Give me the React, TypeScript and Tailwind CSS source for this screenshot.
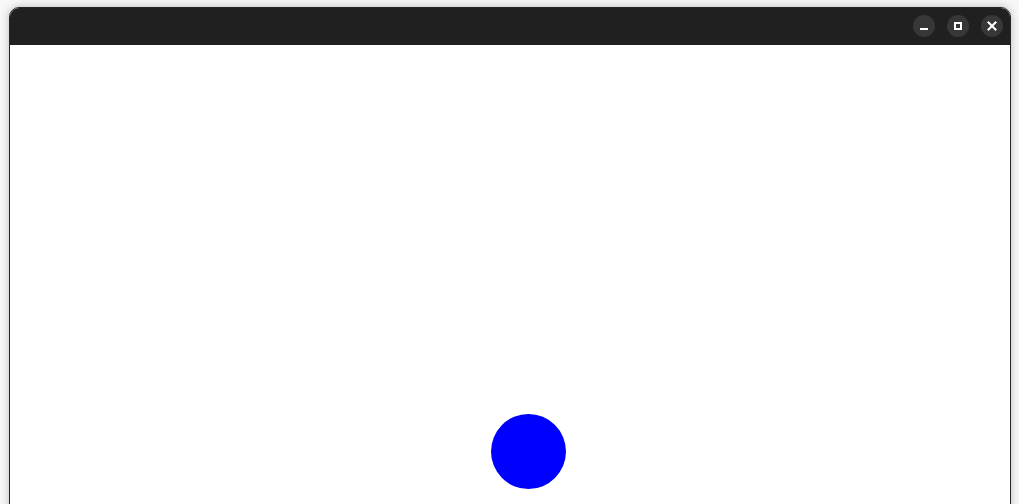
export default function App() {
  return (
    <div className="h-screen w-full overflow-hidden bg-[#f7f7f7] pt-[7px] pl-[9px] pr-[8px]">
      <div className="flex h-[600px] flex-col overflow-hidden rounded-t-[10px] border border-[#262626] bg-white shadow-[0_0_8px_rgba(0,0,0,0.25)]">
        <div className="flex h-[37px] shrink-0 items-start justify-end gap-3 bg-[#202020] pt-[7px] pr-[7px]">
          <button className="flex h-[22px] w-[22px] items-center justify-center rounded-full bg-[#373737]">
            <span className="mt-[6px] block h-[2px] w-[8px] bg-white" />
          </button>
          <button className="flex h-[22px] w-[22px] items-center justify-center rounded-full bg-[#373737]">
            <span className="block h-[8px] w-[8px] border-2 border-white" />
          </button>
          <button className="flex h-[22px] w-[22px] items-center justify-center rounded-full bg-[#373737]">
            <svg width="10" height="10" viewBox="0 0 10 10">
              <path d="M1.5 1.5 L8.5 8.5 M8.5 1.5 L1.5 8.5" stroke="white" strokeWidth="2" strokeLinecap="square" />
            </svg>
          </button>
        </div>
        <div className="flex-1 bg-white">
          <div className="ml-[481px] mt-[369px] h-[75px] w-[75px] rounded-full bg-[#0000ff]" />
        </div>
      </div>
    </div>
  );
}
